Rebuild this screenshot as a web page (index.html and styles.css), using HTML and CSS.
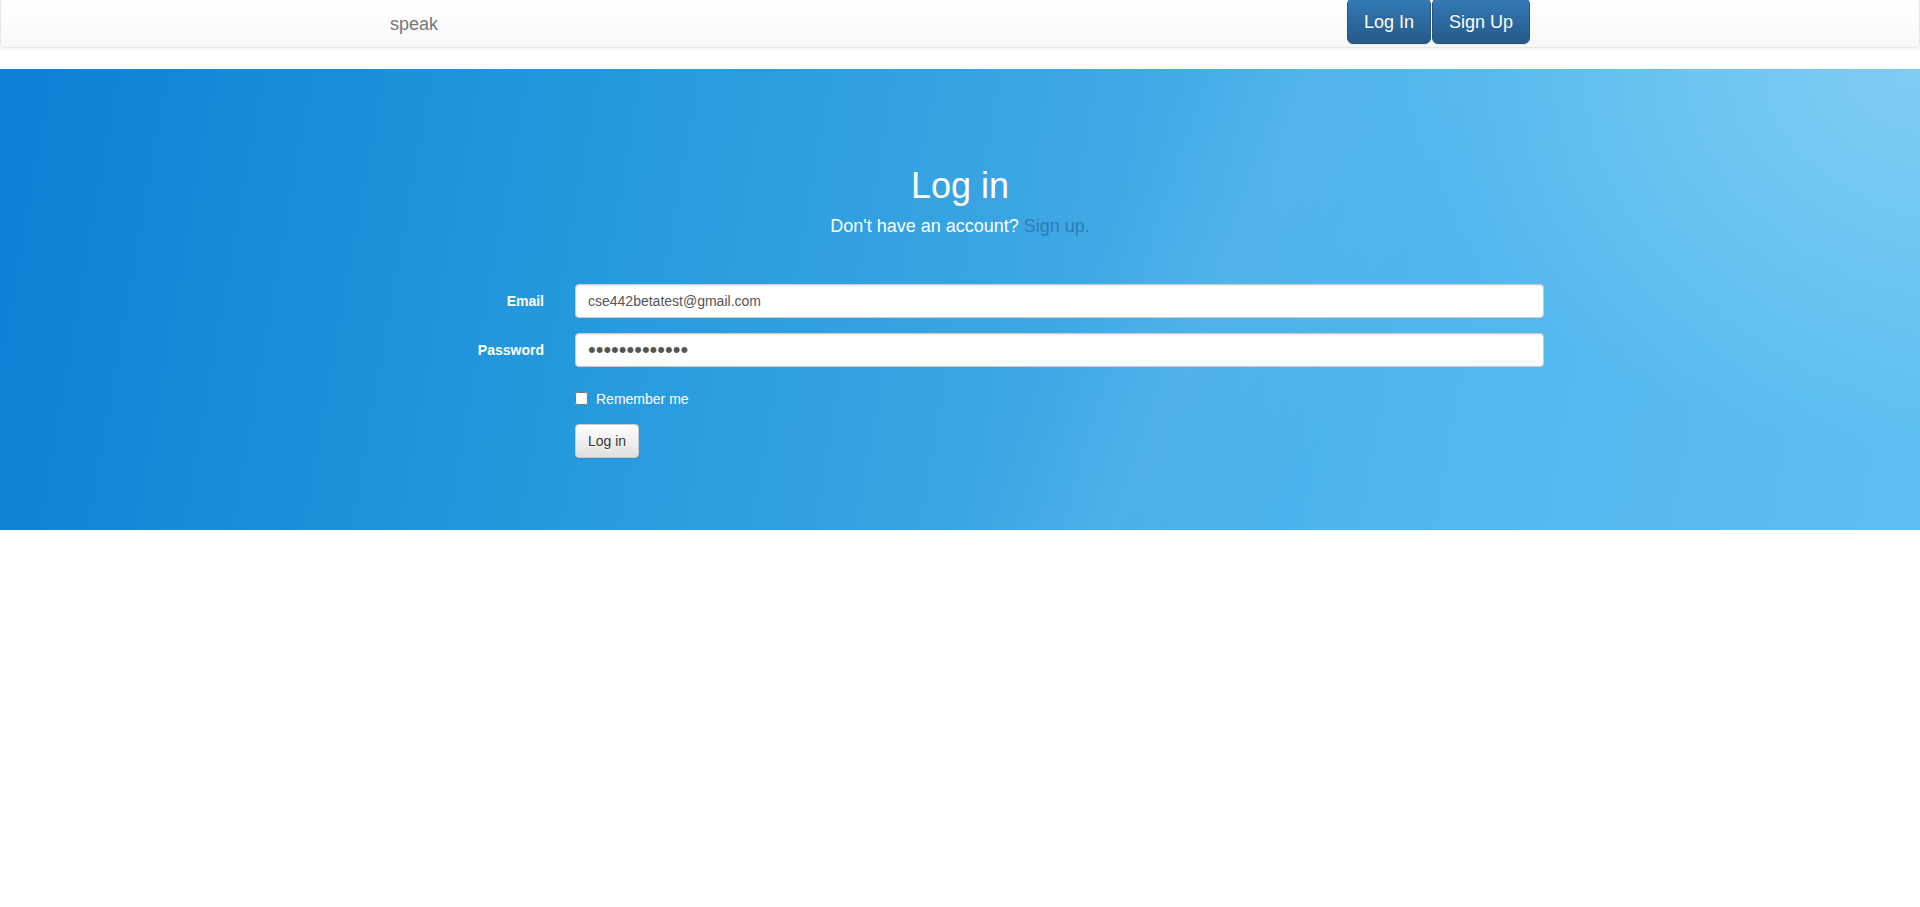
FILE: index.html
```html
<!DOCTYPE html>
<html lang="en">
<head>
  <meta charset="UTF-8">
  <meta name="viewport" content="width=device-width, initial-scale=1.0">
  <title>speak - Log in</title>
  <link rel="stylesheet" href="styles.css">
</head>
<body>

  <nav class="navbar">
    <div class="container">
      <a class="brand" href="#">speak</a>
      <div class="nav-buttons">
        <a class="btn-lg" href="#">Log In</a>
        <a class="btn-lg" href="#">Sign Up</a>
      </div>
    </div>
  </nav>

  <div class="hero">
    <h1>Log in</h1>
    <p class="lead">Don't have an account? <a href="#">Sign up.</a></p>

    <form class="login-form">
      <label class="form-label" for="email">Email</label>
      <input class="form-input" type="email" id="email" value="cse442betatest@gmail.com">

      <label class="form-label" for="password">Password</label>
      <input class="form-input password" type="password" id="password" value="cse442beta123">

      <!-- empty cell under the labels -->
      <span></span>
      <label class="remember">
        <input type="checkbox"> Remember me
      </label>

      <span></span>
      <div>
        <button type="submit" class="btn-default">Log in</button>
      </div>
    </form>
  </div>

</body>
</html>
```

FILE: styles.css
```css
body {
  font-family: 'Liberation Sans', Arial, sans-serif;
  font-size: 14px;
  color: #333;
  background-color: #fff;
  margin: 0;
}

a {
  text-decoration: none;
}

/* Top navigation */
.navbar {
  box-sizing: border-box;
  height: 50px;
  margin-top: -2px;
  margin-bottom: 21px;
  background-image: linear-gradient(to bottom, #fff 0%, #f8f8f8 100%);
  border: 1px solid #e7e7e7;
  border-radius: 4px;
  box-shadow: inset 0 1px 0 rgba(255, 255, 255, 0.15), 0 1px 5px rgba(0, 0, 0, 0.075);
}

.container {
  width: 1140px;
  margin: 0 auto;
  display: flex;
  justify-content: space-between;
  align-items: flex-start;
}

.brand {
  font-size: 18px;
  line-height: 20px;
  color: #777;
  padding-top: 15px;
}

.nav-buttons {
  display: flex;
  gap: 1px;
  margin-top: -1px;
}

.btn-lg {
  display: block;
  font-size: 18px;
  line-height: 24px;
  padding: 11px 16px 9px;
  color: #fff;
  background-image: linear-gradient(to bottom, #337ab7 0%, #265a88 100%);
  border: 1px solid #245580;
  border-radius: 6px;
  text-shadow: 0 -1px 0 rgba(0, 0, 0, 0.2);
  box-shadow: inset 0 1px 0 rgba(255, 255, 255, 0.15), 0 1px 1px rgba(0, 0, 0, 0.075);
}

/* Blue login area */
.hero {
  padding: 97px 0 72px;
  text-align: center;
  color: #fff;
  background-image:
    radial-gradient(ellipse 520px 380px at 100% 0%, rgba(140, 210, 245, 0.75), rgba(140, 210, 245, 0) 100%),
    linear-gradient(115deg, rgba(255, 255, 255, 0) 55%, rgba(255, 255, 255, 0.06) 62%, rgba(255, 255, 255, 0) 70%),
    linear-gradient(100deg, #0e7fd3 0%, #2598dd 30%, #38a4e2 50%, #4fb6ed 72%, #5ebff2 100%);
}

h1 {
  font-size: 36px;
  font-weight: 500;
  line-height: 1.1;
  margin: 0 0 8px;
}

.lead {
  font-size: 18px;
  line-height: 25px;
  margin: 0;
}

.lead a {
  color: #337ab7;
}

.login-form {
  width: 1200px;
  box-sizing: border-box;
  padding-right: 16px;
  margin: 45px auto 0;
  display: grid;
  grid-template-columns: 184px 969px;
  column-gap: 31px;
  row-gap: 15px;
  align-items: center;
  text-align: left;
}

.form-label {
  font-weight: bold;
  text-align: right;
}

.form-input {
  box-sizing: border-box;
  height: 34px;
  width: 100%;
  padding: 6px 12px;
  font-family: inherit;
  font-size: 14px;
  color: #555;
  background-color: #fff;
  border: 1px solid #ccc;
  border-radius: 4px;
  box-shadow: inset 0 1px 1px rgba(0, 0, 0, 0.075);
}

/* bigger dots, like the Windows password field */
.password {
  padding: 0 12px;
  font-size: 22px;
}

.remember {
  display: flex;
  align-items: center;
  gap: 8px;
  line-height: 20px;
  padding-top: 7px;
}

.remember input {
  width: 13px;
  height: 13px;
  margin: 0;
}

.btn-default {
  height: 34px;
  padding: 6px 12px;
  font-family: inherit;
  font-size: 14px;
  line-height: 20px;
  color: #333;
  background-image: linear-gradient(to bottom, #fff 0%, #e0e0e0 100%);
  border: 1px solid #ccc;
  border-radius: 4px;
  text-shadow: 0 1px 0 #fff;
  box-shadow: inset 0 1px 0 rgba(255, 255, 255, 0.15), 0 1px 1px rgba(0, 0, 0, 0.075);
  cursor: pointer;
}
```
